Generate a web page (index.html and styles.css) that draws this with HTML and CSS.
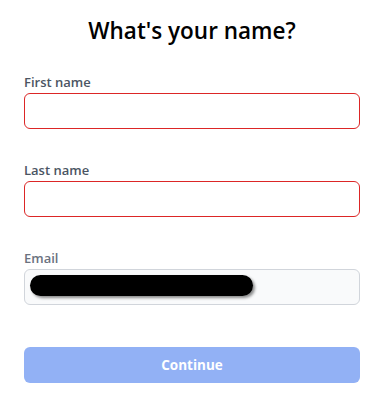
FILE: index.html
```html
<!DOCTYPE html>
<html lang="en">
<head>
	<meta charset="UTF-8">
	<title>What's your name?</title>
	<link rel="stylesheet" href="styles.css">
</head>
<body>
	<div class="container">
		<h1 class="title">What's your name?</h1>
		<form class="form">
			<div class="field">
				<label class="label" for="first">First name</label>
				<input class="input error" id="first" type="text">
			</div>
			<div class="field">
				<label class="label" for="last">Last name</label>
				<input class="input error" id="last" type="text">
			</div>
			<div class="field">
				<label class="label muted">Email</label>
				<div class="input disabled"><span class="redact"></span></div>
			</div>
			<button class="btn" type="button" disabled>Continue</button>
		</form>
	</div>
</body>
</html>
```

FILE: styles.css
```css
*{margin: 0;padding: 0;box-sizing: border-box;}
body{
	background-color: #fff;
	font-family: "Open Sans", "Noto Sans", sans-serif;
	color: #111;
}
.container{
	width: 336px;
	margin-left: 24px;
	padding-top: 15px;
}
.title{
	font-size: 22.5px;
	line-height: 32px;
	font-weight: 600;
	text-align: center;
	color: #000;
	margin-bottom: 25px;
}
.field{
	margin-bottom: 31px;
}
.label{
	display: block;
	font-size: 13px;
	line-height: 20px;
	font-weight: 600;
	color: #4b5563;
	margin-bottom: 1px;
}
.label.muted{
	color: #6b7280;
}
.input{
	display: block;
	width: 100%;
	height: 36px;
	border: 1px solid #d1d5db;
	border-radius: 6px;
	background: #fff;
	font: inherit;
	outline: none;
}
.input.error{
	border-color: #dc2626;
}
.input.disabled{
	background: #f9fafb;
	padding: 5px 0 0 5px;
}
.redact{
	display: block;
	width: 223px;
	height: 21px;
	border-radius: 11px;
	background: #000;
	box-shadow: 2px 2px 3px rgba(0,0,0,0.45);
}
.btn{
	display: block;
	width: 100%;
	height: 36px;
	margin-top: 42px;
	border: none;
	border-radius: 6px;
	background: #92b1f5;
	color: #fff;
	font: inherit;
	font-size: 13.5px;
	font-weight: 700;
}
```
